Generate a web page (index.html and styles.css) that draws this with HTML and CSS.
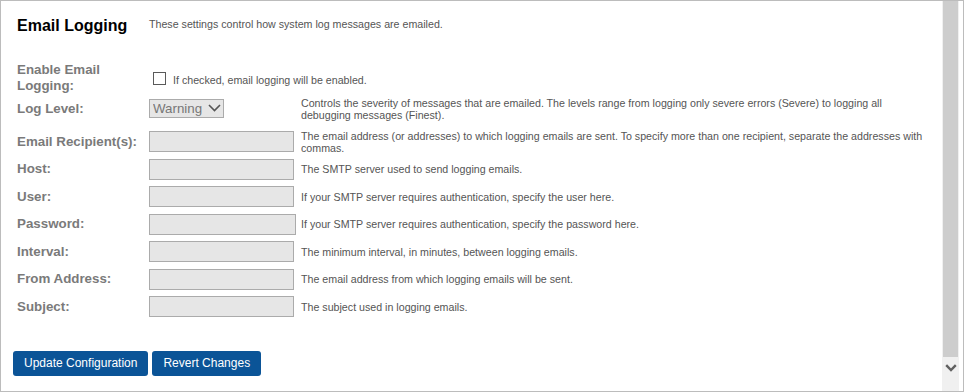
FILE: index.html
```html
<!DOCTYPE html>
<html lang="en">
<head>
    <meta charset="UTF-8">
    <title>Email Logging</title>
    <link rel="stylesheet" href="styles.css">
</head>
<body>
    <div class="frame">
        <div class="content">
            <div class="panel-header">
                <h2 class="panel-title">Email Logging</h2>
                <p class="panel-desc">These settings control how system log messages are emailed.</p>
            </div>

            <form class="settings-form" id="email-logging-form">
                <label class="field-label" for="enabled">Enable Email Logging:</label>
                <div class="field-check">
                    <input type="checkbox" id="enabled" class="checkbox">
                    <span class="help">If checked, email logging will be enabled.</span>
                </div>

                <label class="field-label" for="level">Log Level:</label>
                <div class="select-wrap">
                    <select id="level" class="select">
                        <option>Severe</option>
                        <option selected>Warning</option>
                        <option>Info</option>
                        <option>Fine</option>
                        <option>Finest</option>
                    </select>
                    <svg class="select-arrow" width="13" height="8" viewBox="0 0 13 8"><polyline points="1,1 6.5,6.5 12,1" fill="none" stroke="#555" stroke-width="1.6"/></svg>
                </div>
                <div class="help">Controls the severity of messages that are emailed. The levels range from logging only severe errors (Severe) to logging all debugging messages (Finest).</div>

                <label class="field-label" for="recipients">Email Recipient(s):</label>
                <input type="text" id="recipients" class="text-input">
                <div class="help">The email address (or addresses) to which logging emails are sent. To specify more than one recipient, separate the addresses with commas.</div>

                <label class="field-label" for="host">Host:</label>
                <input type="text" id="host" class="text-input">
                <div class="help">The SMTP server used to send logging emails.</div>

                <label class="field-label" for="user">User:</label>
                <input type="text" id="user" class="text-input">
                <div class="help">If your SMTP server requires authentication, specify the user here.</div>

                <label class="field-label" for="password">Password:</label>
                <input type="password" id="password" class="text-input text-input-password">
                <div class="help">If your SMTP server requires authentication, specify the password here.</div>

                <label class="field-label" for="interval">Interval:</label>
                <input type="text" id="interval" class="text-input">
                <div class="help">The minimum interval, in minutes, between logging emails.</div>

                <label class="field-label" for="from">From Address:</label>
                <input type="text" id="from" class="text-input">
                <div class="help">The email address from which logging emails will be sent.</div>

                <label class="field-label" for="subject">Subject:</label>
                <input type="text" id="subject" class="text-input">
                <div class="help">The subject used in logging emails.</div>
            </form>

            <div class="button-row">
                <button type="submit" form="email-logging-form" class="btn">Update Configuration</button>
                <button type="reset" form="email-logging-form" class="btn">Revert Changes</button>
            </div>
        </div>

        <div class="scrollbar">
            <div class="scroll-thumb"></div>
            <div class="scroll-down">
                <svg width="12" height="8" viewBox="0 0 12 8"><polyline points="1.2,1.2 6,6 10.8,1.2" fill="none" stroke="#606060" stroke-width="2.4"/></svg>
            </div>
        </div>
    </div>
</body>
</html>
```

FILE: styles.css
```css
* {
    margin: 0;
    padding: 0;
    box-sizing: border-box;
}

body {
    font-family: 'Liberation Sans', Arial, sans-serif;
    background: white;
}

.frame {
    width: 964px;
    height: 392px;
    border: 1px solid #bcbcbc;
    display: flex;
    overflow: hidden;
}

.content {
    flex: 1;
    padding: 15.5px 11px 0 12px;
}

/* header */

.panel-header {
    display: grid;
    grid-template-columns: 132px 1fr;
    align-items: start;
    margin-left: 4px;
}

.panel-title {
    font-size: 16px;
    line-height: 18px;
    font-weight: bold;
    color: #000;
}

.panel-desc {
    font-size: 10.67px;
    line-height: 12px;
    color: #555;
    padding-top: 1px;
}

/* form rows */

.settings-form {
    display: grid;
    grid-template-columns: 132px 152px 1fr;
    grid-template-rows: 22.5px 38.5px repeat(7, 27.5px);
    align-items: center;
    margin: 32.25px 0 0 4px;
}

.field-label {
    font-size: 13.33px;
    line-height: 16px;
    font-weight: bold;
    color: #7a7a7a;
}

.help {
    font-size: 10.67px;
    line-height: 12px;
    color: #555;
}

.field-check {
    grid-column: 2 / 4;
    display: flex;
    align-items: center;
}

.checkbox {
    appearance: none;
    width: 13px;
    height: 13px;
    border: 1px solid #5a5a5a;
    background: white;
    margin: 0 7px 0 4px;
}

.field-check .help {
    padding-top: 3px;
}

.text-input {
    width: 145px;
    height: 21px;
    background: #e6e6e6;
    border: 1px solid #ababab;
    font-size: 13.33px;
    font-family: inherit;
    padding: 0 3px;
}

.text-input-password {
    width: 147px;
}

.select-wrap {
    position: relative;
    width: 75px;
    height: 19px;
}

.select {
    appearance: none;
    width: 75px;
    height: 19px;
    background: #e6e6e6;
    border: 1px solid #ababab;
    border-radius: 0;
    font-family: inherit;
    font-size: 13.33px;
    color: #777;
    padding: 0 0 0 3px;
    outline: none;
}

.select-arrow {
    position: absolute;
    right: 3px;
    top: 5px;
    pointer-events: none;
}

.settings-form .help {
    align-self: center;
}

/* buttons */

.button-row {
    display: flex;
    gap: 4px;
    margin-top: 30.25px;
}

.btn {
    height: 25px;
    padding: 0 11px;
    background: #0b5497;
    color: white;
    border: none;
    border-radius: 3px;
    font-family: inherit;
    font-size: 12px;
    cursor: pointer;
}

/* fake scrollbar */

.scrollbar {
    width: 17px;
    margin-right: 4px;
    background: #f0f0f0;
    display: flex;
    flex-direction: column;
}

.scroll-thumb {
    height: 356px;
    margin: 0 1px;
    background: #cdcdcd;
}

.scroll-down {
    flex: 1;
    display: flex;
    justify-content: center;
    padding-top: 7px;
}
```
